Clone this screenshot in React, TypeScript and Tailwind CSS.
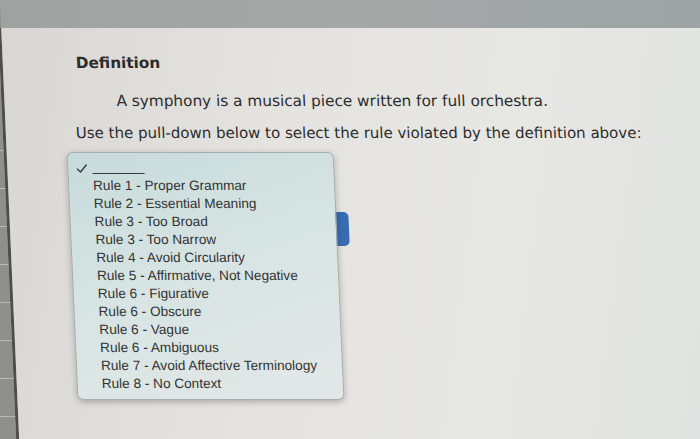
const rules = [
  "Rule 1 - Proper Grammar",
  "Rule 2 - Essential Meaning",
  "Rule 3 - Too Broad",
  "Rule 3 - Too Narrow",
  "Rule 4 - Avoid Circularity",
  "Rule 5 - Affirmative, Not Negative",
  "Rule 6 - Figurative",
  "Rule 6 - Obscure",
  "Rule 6 - Vague",
  "Rule 6 - Ambiguous",
  "Rule 7 - Avoid Affective Terminology",
  "Rule 8 - No Context",
];

const sideCells = [
  "bg-[#8f908c]",
  "bg-[#8f908c]",
  "bg-[#8f908c]",
  "bg-[#8f908c]",
  "bg-[#8f908c]",
  "bg-[#8f908c]",
  "bg-[#8f908c]",
  "bg-[#8f908c]",
  "bg-[#3b67ad]",
  "bg-[#8f908c]",
  "bg-[#8f908c]",
];

function CheckMark() {
  return (
    <svg width="11" height="9" viewBox="0 0 11 9" className="block">
      <path
        d="M1 5 L4 8 L10 1"
        fill="none"
        stroke="#3a3a3a"
        strokeWidth="1.4"
        strokeLinecap="round"
        strokeLinejoin="round"
      />
    </svg>
  );
}

function RuleMenu() {
  return (
    <div className="relative ml-[60px] mt-[10px] w-[267px]">
      {/* the select button peeking out behind the open menu */}
      <div className="absolute right-[-12px] top-[60px] h-[34px] w-[40px] rounded-r-[5px] bg-[#3a6cb3]" />
      <ul className="relative rounded-[6px] border border-[#a7aeae] bg-[linear-gradient(160deg,#c7dbdb,#d6e4e3_45%,#e3e8e7)] py-[6px] font-['Liberation_Sans',Arial,sans-serif] text-[13.6px] leading-[18px] text-[#333] shadow-[0_2px_6px_rgba(0,0,0,0.25)]">
        <li className="flex h-[18px] items-center">
          <span className="ml-[8px] w-[16px]">
            <CheckMark />
          </span>
          <span className="mt-[10px] block h-px w-[52px] bg-[#3a3a3a]" />
        </li>
        {rules.map((rule) => (
          <li key={rule} className="h-[18px] whitespace-nowrap pl-[24px]">
            {rule}
          </li>
        ))}
      </ul>
    </div>
  );
}

export default function App() {
  return (
    <div className="h-[439px] w-[700px] overflow-hidden bg-[#8f908c]">
      <div className="flex h-full w-[730px] origin-top-left skew-x-[2.5deg] flex-col">
        <div className="h-[28px] w-full shrink-0 bg-[linear-gradient(90deg,#9ea2a1,#a3a7a6_50%,#9da3a4)]" />
        <div className="flex flex-1">
          <div className="-ml-[20px] flex w-[20px] shrink-0 flex-col border-r-[3px] border-[#4d4d4a]">
            <div className="h-[122px] bg-[#8f908c]" />
            {sideCells.map((c, i) => (
              <div key={i} className={`h-[38px] shrink-0 border-t border-[#b9bab6] ${c}`} />
            ))}
          </div>
          <div className="flex-1 bg-[linear-gradient(100deg,#d9d7d3,#e4e3e0_35%,#e7e7e4_65%,#dfe2e1)] font-['DejaVu_Sans',Verdana,sans-serif] text-[#2c2c2c]">
            <h2 className="ml-[73px] mt-[26px] text-[15.3px] font-bold leading-[18px]">Definition</h2>
            <p className="ml-[112px] mt-[20px] text-[15.3px] leading-[18px]">
              A symphony is a musical piece written for full orchestra.
            </p>
            <p className="ml-[70px] mt-[14px] text-[15px] leading-[18px]">
              Use the pull-down below to select the rule violated by the definition above:
            </p>
            <RuleMenu />
          </div>
        </div>
      </div>
    </div>
  );
}
